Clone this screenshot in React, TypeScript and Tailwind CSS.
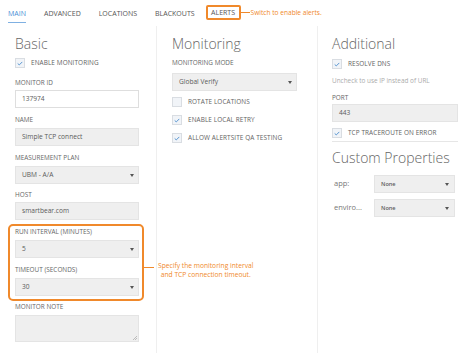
import React from "react";

function Check({ checked }: { checked: boolean }) {
  return (
    <span className="w-[10px] h-[10px] border border-[#d9dde2] bg-[#f1f4f8] flex items-center justify-center shrink-0">
      {checked && (
        <svg width="6" height="5" viewBox="0 0 6 5">
          <path d="M0.7 2.5 L2.3 3.9 L5.3 0.9" stroke="#5b97d1" strokeWidth="1" fill="none" />
        </svg>
      )}
    </span>
  );
}

function CheckRow({ checked, label, className = "" }: { checked: boolean; label: string; className?: string }) {
  return (
    <div className={"flex items-center h-[10px] gap-[6px] " + className}>
      <Check checked={checked} />
      <span className="text-[6.4px] leading-[10px] text-[#626262] tracking-[0.1px]">{label}</span>
    </div>
  );
}

function Label({ text, className = "" }: { text: string; className?: string }) {
  return <div className={"h-[10px] text-[6.4px] leading-[10px] text-[#666] " + className}>{text}</div>;
}

function Arrow() {
  return (
    <svg width="4" height="3" viewBox="0 0 4 3" className="shrink-0">
      <path d="M0 0 L4 0 L2 3 Z" fill="#555" />
    </svg>
  );
}

function Input({ value, white = false, className = "" }: { value: string; white?: boolean; className?: string }) {
  return (
    <div
      className={
        "h-[18px] border flex items-center pl-[6px] text-[6.6px] text-[#5a5a5a] " +
        (white ? "bg-white border-[#dedede] " : "bg-[#efefef] border-[#e4e4e4] ") +
        className
      }
    >
      {value}
    </div>
  );
}

function Select({ value, className = "", small = false }: { value: string; className?: string; small?: boolean }) {
  return (
    <div
      className={
        "h-[18px] border bg-[#efefef] border-[#e4e4e4] flex items-center justify-between text-[#5a5a5a] " +
        (small ? "pl-[6px] pr-[5px] text-[5.6px] font-semibold " : "pl-[6px] pr-[4px] text-[6.6px] ") +
        className
      }
    >
      <span>{value}</span>
      <Arrow />
    </div>
  );
}

function Heading({ text, className = "" }: { text: string; className?: string }) {
  return <div className={"text-[14px] leading-[20px] text-[#666] font-light " + className}>{text}</div>;
}

export default function App() {
  return (
    <div className="w-[474px] h-[353px] bg-white overflow-hidden font-['Open_Sans',sans-serif] flex flex-col">
      {/* Tabs */}
      <div className="h-[26px] flex items-start pl-[8px] text-[7px] text-[#555] shrink-0">
        <div className="relative mt-[8px] h-[11px] leading-[11px] text-[#4a8fd6]">
          MAIN
          <div className="absolute left-0 right-0 top-[14px] h-px bg-[#7fb0e2]" />
        </div>
        <div className="ml-[18px] mt-[8px] leading-[11px]">ADVANCED</div>
        <div className="ml-[18px] mt-[8px] leading-[11px]">LOCATIONS</div>
        <div className="ml-[18px] mt-[8px] leading-[11px]">BLACKOUTS</div>
        <div className="ml-[11px] mt-[5px] h-[15px] w-[35px] border-2 border-[#f0892b] rounded-[2px] flex items-center justify-center leading-[11px]">
          ALERTS
        </div>
        <div className="mt-[12px] w-[9px] h-px bg-[#f0892b]" />
        <div className="mt-[7px] ml-[1px] leading-[11px] text-[6.6px] text-[#f0892b]">Switch to enable alerts.</div>
      </div>

      <div className="flex flex-1">
        {/* Column 1 */}
        <div className="w-[157px] border-r border-[#efefef] pl-[15px] pr-[17px] pt-[8px] flex flex-col">
          <Heading text="Basic" />
          <CheckRow checked label="ENABLE MONITORING" className="mt-[4px]" />
          <Label text="MONITOR ID" className="mt-[10px]" />
          <Input value="137974" white className="mt-[2px] h-[17px]" />
          <Label text="NAME" className="mt-[7px]" />
          <Input value="Simple TCP connect" className="mt-[3px] h-[17px]" />
          <Label text="MEASUREMENT PLAN" className="mt-[7px]" />
          <Select value="UBM - A/A" className="mt-[3px]" />
          <Label text="HOST" className="mt-[6px]" />
          <Input value="smartbear.com" className="mt-[2px]" />
          <div className="relative mt-[4px] -ml-[7px] -mr-[5px] pl-[5px] pr-[3px] border-2 border-[#f0892b] rounded-[5px] pt-[1px] pb-[3px]">
            <Label text="RUN INTERVAL (MINUTES)" />
            <Select value="5" className="mt-[3px]" />
            <Label text="TIMEOUT (SECONDS)" className="mt-[7px]" />
            <Select value="30" className="mt-[3px]" />
            <div className="absolute left-full top-[36px] flex items-start">
              <div className="w-[11px] h-px bg-[#f0892b] mt-[5px] ml-[1px]" />
              <div className="ml-[4px] -mt-[1px] text-center text-[6.7px] leading-[9px] text-[#f0892b] whitespace-nowrap">
                Specify the monitoring interval
                <br />
                and TCP connection timeout.
              </div>
            </div>
          </div>
          <Label text="MONITOR NOTE" className="mt-[1px]" />
          <div className="relative mt-[3px] h-[27px] bg-[#efefef] border border-[#e4e4e4]">
            <svg width="5" height="5" viewBox="0 0 5 5" className="absolute right-[1px] bottom-[1px]">
              <path d="M1 5 L5 1 M3 5 L5 3" stroke="#999" strokeWidth="0.6" />
            </svg>
          </div>
        </div>

        {/* Column 2 */}
        <div className="w-[161px] border-r border-[#efefef] pl-[15px] pr-[20px] pt-[8px] flex flex-col">
          <Heading text="Monitoring" />
          <Label text="MONITORING MODE" className="mt-[4px]" />
          <Select value="Global Verify" className="mt-[5px] h-[17px]" />
          <CheckRow checked={false} label="ROTATE LOCATIONS" className="mt-[6px]" />
          <CheckRow checked label="ENABLE LOCAL RETRY" className="mt-[8px]" />
          <CheckRow checked label="ALLOW ALERTSITE QA TESTING" className="mt-[8px]" />
        </div>

        {/* Column 3 */}
        <div className="flex-1 pl-[14px] pr-[16px] pt-[8px] flex flex-col">
          <Heading text="Additional" />
          <CheckRow checked label="RESOLVE DNS" className="mt-[5px]" />
          <div className="mt-[7px] h-[10px] text-[6.4px] leading-[10px] text-[#ababab]">Uncheck to use IP instead of URL</div>
          <Label text="PORT" className="mt-[7px]" />
          <Input value="443" className="mt-[1px] h-[17px]" />
          <CheckRow checked label="TCP TRACEROUTE ON ERROR" className="mt-[6px]" />
          <div className="mt-[3px] h-px bg-[#e6e6e6]" />
          <Heading text="Custom Properties" className="mt-[6px]" />
          <div className="mt-[7px] flex items-center">
            <span className="w-[42px] pl-[2px] text-[7.5px] text-[#777]">app:</span>
            <Select value="None" small className="w-[81px] h-[17px]" />
          </div>
          <div className="mt-[6px] flex items-center">
            <span className="w-[42px] pl-[2px] text-[7.5px] text-[#777]">enviro...</span>
            <Select value="None" small className="w-[81px] h-[17px]" />
          </div>
        </div>
      </div>
    </div>
  );
}
